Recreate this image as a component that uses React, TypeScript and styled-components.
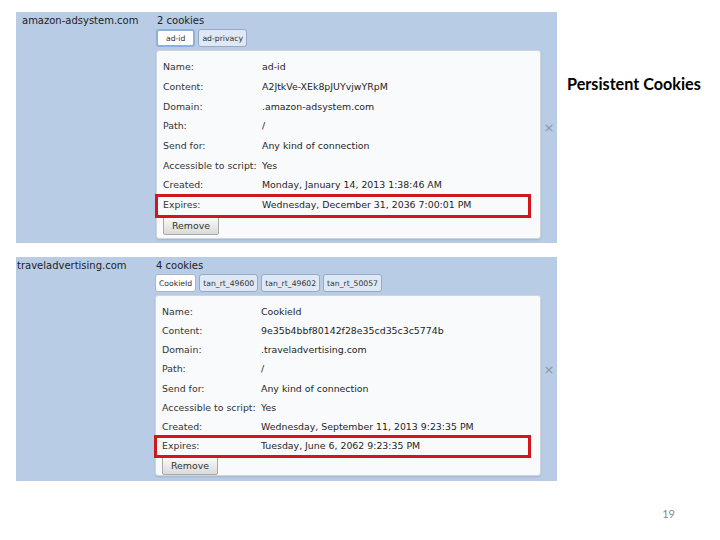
import React from 'react';
import styled, { createGlobalStyle, css } from 'styled-components';

const GlobalStyle = createGlobalStyle`
  html, body {
    margin: 0;
    padding: 0;
    background: #fff;
  }
  body {
    font-family: "DejaVu Sans", "Liberation Sans", sans-serif;
  }
`;

const Slide = styled.div`
  width: 720px;
  height: 540px;
  box-sizing: border-box;
  padding: 12px 0 0 16px;
  display: flex;
  flex-direction: column;
  background: #fff;
  overflow: hidden;
`;

const Body = styled.div`
  display: grid;
  grid-template-columns: 541px 1fr;
`;

const Shots = styled.div`
  display: flex;
  flex-direction: column;
  gap: 14px;
`;

const Caption = styled.div`
  padding: 62px 0 0 10px;
  font-family: Lato, "Open Sans", sans-serif;
  font-size: 16.2px;
  font-weight: 700;
  color: #000;
  white-space: nowrap;
`;

const Footer = styled.div`
  margin-top: auto;
  display: flex;
  justify-content: flex-end;
  padding: 0 45px 20px 0;
  font-family: Lato, "Open Sans", sans-serif;
  font-size: 11px;
  color: #8a8a8a;
`;

const Panel = styled.div<{ $site: number; $pad: number; $h: number }>`
  height: ${(p) => p.$h}px;
  box-sizing: border-box;
  background: #b9cce6;
  display: grid;
  grid-template-columns: ${(p) => p.$site}px 1fr 16px;
  padding-left: ${(p) => p.$pad}px;
  color: #222;
`;

const Site = styled.div`
  font-size: 10px;
  padding-top: 2px;
  line-height: 14px;
`;

const Cookies = styled.div`
  display: flex;
  flex-direction: column;
  padding-top: 2px;
`;

const Count = styled.div`
  font-size: 10px;
  line-height: 14px;
  padding-left: 1px;
`;

const Tabs = styled.div`
  display: flex;
  gap: 3px;
  margin-top: 1px;
  height: 18px;
`;

const Tab = styled.div<{ $active?: boolean; $focus?: boolean }>`
  box-sizing: border-box;
  height: 18px;
  padding: 0 3px;
  display: flex;
  align-items: center;
  font-size: 7.7px;
  border-radius: 3px;
  color: #333;
  background: #dfe8f5;
  border: 1px solid #97a9c4;
  ${(p) =>
    p.$active &&
    css`
      background: #fff;
      border-color: #a9b6c8;
    `}
  ${(p) =>
    p.$focus &&
    css`
      border: 2px solid #8fb0dd;
      padding: 0 8px;
    `}
`;

const Details = styled.div<{ $top: number; $h: number }>`
  margin-top: ${(p) => p.$top}px;
  height: ${(p) => p.$h}px;
  box-sizing: border-box;
  background: #f9fafb;
  border: 1px solid #cdd5df;
  border-radius: 3px;
  box-shadow: 0 1px 2px rgba(0, 0, 0, 0.12);
  padding: 6px 0 0 6px;
  display: flex;
  flex-direction: column;
`;

const Row = styled.div<{ $h: number; $mark?: boolean }>`
  position: relative;
  display: grid;
  grid-template-columns: 99px 1fr;
  height: ${(p) => p.$h}px;
  align-items: center;
  font-size: 9.4px;
  white-space: nowrap;
  ${(p) =>
    p.$mark &&
    css`
      &::after {
        content: '';
        position: absolute;
        left: -8px;
        right: 9px;
        top: -1px;
        bottom: -3px;
        border: 3px solid #d3161d;
      }
    `}
`;

const Label = styled.span`
  color: #333;
`;

const Value = styled.span`
  color: #1f1f1f;
`;

const RemoveButton = styled.button`
  align-self: flex-start;
  margin-top: 1px;
  height: 19px;
  padding: 0 8px;
  font-family: "DejaVu Sans", sans-serif;
  font-size: 9.4px;
  color: #333;
  background: linear-gradient(#fbfbfb, #dadada);
  border: 1px solid #a9a9a9;
  border-radius: 2px;
`;

const Close = styled.div`
  align-self: center;
  justify-self: center;
  font-size: 13px;
  color: #8d95a3;
  line-height: 1;
`;

type Field = [string, string];

type ShotProps = {
  site: string;
  count: string;
  tabs: string[];
  focused?: boolean;
  fields: Field[];
  siteCol: number;
  pad: number;
  height: number;
  boxTop: number;
  boxHeight: number;
  rowH: number;
};

const Shot = ({ site, count, tabs, focused, fields, siteCol, pad, height, boxTop, boxHeight, rowH }: ShotProps) => (
  <Panel $site={siteCol} $pad={pad} $h={height}>
    <Site>{site}</Site>
    <Cookies>
      <Count>{count}</Count>
      <Tabs>
        {tabs.map((t, i) => (
          <Tab key={t} $active={i === 0} $focus={i === 0 && focused}>
            {t}
          </Tab>
        ))}
      </Tabs>
      <Details $top={boxTop} $h={boxHeight}>
        {fields.map(([k, v]) => (
          <Row key={k} $h={rowH} $mark={k === 'Expires:'}>
            <Label>{k}</Label>
            <Value>{v}</Value>
          </Row>
        ))}
        <RemoveButton>Remove</RemoveButton>
      </Details>
    </Cookies>
    <Close>×</Close>
  </Panel>
);

const amazon: Field[] = [
  ['Name:', 'ad-id'],
  ['Content:', 'A2JtkVe-XEk8pJUYvjwYRpM'],
  ['Domain:', '.amazon-adsystem.com'],
  ['Path:', '/'],
  ['Send for:', 'Any kind of connection'],
  ['Accessible to script:', 'Yes'],
  ['Created:', 'Monday, January 14, 2013 1:38:46 AM'],
  ['Expires:', 'Wednesday, December 31, 2036 7:00:01 PM'],
];

const travel: Field[] = [
  ['Name:', 'CookieId'],
  ['Content:', '9e35b4bbf80142f28e35cd35c3c5774b'],
  ['Domain:', '.traveladvertising.com'],
  ['Path:', '/'],
  ['Send for:', 'Any kind of connection'],
  ['Accessible to script:', 'Yes'],
  ['Created:', 'Wednesday, September 11, 2013 9:23:35 PM'],
  ['Expires:', 'Tuesday, June 6, 2062 9:23:35 PM'],
];

const App = () => (
  <>
    <GlobalStyle />
    <Slide>
      <Body>
        <Shots>
          <Shot
            site="amazon-adsystem.com"
            count="2 cookies"
            tabs={['ad-id', 'ad-privacy']}
            focused
            fields={amazon}
            siteCol={134}
            pad={6}
            height={231}
            boxTop={3}
            boxHeight={189}
            rowH={19.7}
          />
          <Shot
            site="traveladvertising.com"
            count="4 cookies"
            tabs={['CookieId', 'tan_rt_49600', 'tan_rt_49602', 'tan_rt_50057']}
            fields={travel}
            siteCol={138}
            pad={1}
            height={224}
            boxTop={3}
            boxHeight={181}
            rowH={19.2}
          />
        </Shots>
        <Caption>Persistent Cookies</Caption>
      </Body>
      <Footer>19</Footer>
    </Slide>
  </>
);

export default App;
